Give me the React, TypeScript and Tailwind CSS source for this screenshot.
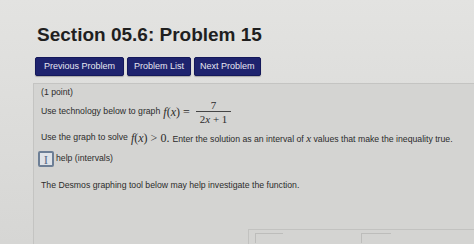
import React from 'react';

function NavButton({ label, pad }: { label: string; pad: string }) {
  return (
    <button className={`h-[19px] rounded-[2px] border border-[#14185a] bg-[#1e236e] text-[9px] leading-none text-[#e6e7f2] shadow-[0_1px_1px_rgba(0,0,0,0.25)] ${pad}`}>
      {label}
    </button>
  );
}

function Fx() {
  return (
    <span className="font-['Liberation_Serif',serif] text-[12px] italic">
      f<span className="not-italic">(</span>x<span className="not-italic">)</span>
    </span>
  );
}

export default function App() {
  return (
    <div className="h-[244px] w-[474px] overflow-hidden bg-gradient-to-b from-[#e3e3e1] to-[#d6d6d4] font-['Liberation_Sans',Arial,sans-serif] text-[#2a2a2a]">
      <div className="pl-[37px] pt-[24px]">
        <h1 className="text-[19px] font-bold leading-[22px] text-[#1f1f1f]">Section 05.6: Problem 15</h1>
      </div>
      <div className="mt-[11px] flex gap-[3px] pl-[35px]">
        <NavButton label="Previous Problem" pad="px-[8px]" />
        <NavButton label="Problem List" pad="px-[6px]" />
        <NavButton label="Next Problem" pad="px-[5px]" />
      </div>
      <div className="ml-[33px] mt-[7px] h-[200px] border-l border-t border-[#c4c4c2] bg-[#d4d4d2] pl-[7px] pt-[2px] text-[8.7px] text-[#2c2c2c]">
        <p className="leading-[12px]">(1 point)</p>
        <div className="mt-[1px] flex items-center gap-[3px]">
          <span>Use technology below to graph</span>
          <Fx />
          <span className="font-['Liberation_Serif',serif] text-[12px]">=</span>
          <span className="ml-[3px] inline-flex flex-col items-center font-['Liberation_Serif',serif] text-[11px] leading-[12px]">
            <span className="px-[2px]">7</span>
            <span className="border-t border-[#444] px-[4px] pt-[1px]">
              2<i>x</i> + 1
            </span>
          </span>
        </div>
        <div className="mt-[4px] flex items-center gap-[3px]">
          <span>Use the graph to solve</span>
          <Fx />
          <span className="font-['Liberation_Serif',serif] text-[12px]">&gt; 0.</span>
          <span>
            Enter the solution as an interval of{' '}
            <i className="font-['Liberation_Serif',serif] text-[11px]">x</i> values that make the inequality true.
          </span>
        </div>
        <div className="-ml-[3px] mt-[4px] flex items-center gap-[2px]">
          <span className="flex h-[16px] w-[16px] shrink-0 items-center justify-center rounded-[2px] border-2 border-[#6d7f96] bg-[#dfe3e8] font-['Liberation_Serif',serif] text-[13px] leading-none text-[#5a6e88]">
            I
          </span>
          <span>help (intervals)</span>
        </div>
        <p className="mt-[12px] leading-[12px]">The Desmos graphing tool below may help investigate the function.</p>
        <div className="ml-[207px] mt-[38px] flex h-[20px] gap-[8px] border-l border-t border-[#c2c2c0] pl-[6px] pt-[3px]">
          <div className="h-[10px] w-[28px] border-l border-t border-[#bdbdbb]" />
          <div className="ml-[70px] h-[10px] w-[30px] border-l border-t border-[#bdbdbb]" />
        </div>
      </div>
    </div>
  );
}
